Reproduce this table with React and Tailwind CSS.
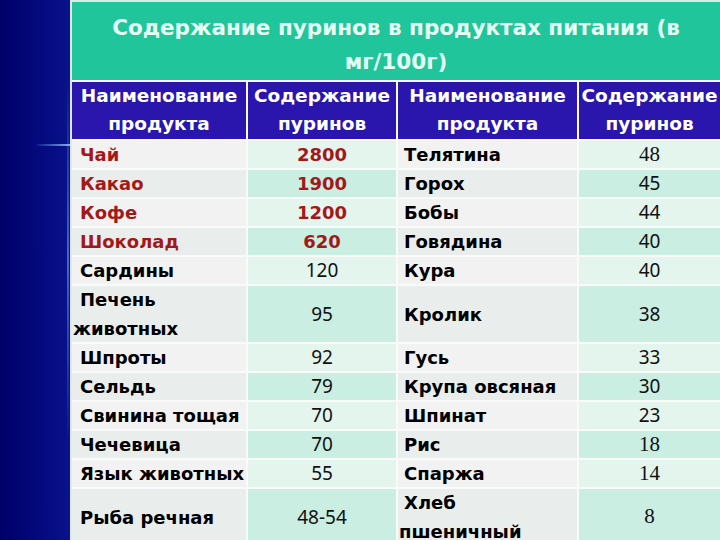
import React from "react";

const rows = [
  { a: "Чай", b: "2800", c: "Телятина", d: "48", red: true, serif: true },
  { a: "Какао", b: "1900", c: "Горох", d: "45", red: true },
  { a: "Кофе", b: "1200", c: "Бобы", d: "44", red: true },
  { a: "Шоколад", b: "620", c: "Говядина", d: "40", red: true },
  { a: "Сардины", b: "120", c: "Кура", d: "40" },
  { a: ["Печень", "животных"], b: "95", c: "Кролик", d: "38", tall: true },
  { a: "Шпроты", b: "92", c: "Гусь", d: "33" },
  { a: "Сельдь", b: "79", c: "Крупа овсяная", d: "30" },
  { a: "Свинина тощая", b: "70", c: "Шпинат", d: "23" },
  { a: "Чечевица", b: "70", c: "Рис", d: "18", serif: true },
  { a: "Язык животных", b: "55", c: "Спаржа", d: "14", serif: true },
  { a: "Рыба речная", b: "48-54", c: ["Хлеб", "пшеничный"], d: "8", tall: true, serif: true },
];

const bold = "font-['DejaVu_Sans',sans-serif] font-bold";

function NameCell({ value, width, pad, dark, red }) {
  const bg = dark ? "bg-[#e9eeec]" : "bg-[#f1f2f1]";
  const color = red ? "text-[#a31818]" : "text-black";
  return (
    <div className={`${width} ${bg} ${color} ${bold} text-[18px] leading-[29px] flex flex-col justify-center whitespace-nowrap`}>
      {Array.isArray(value) ? (
        <>
          <span className={pad}>{value[0]}</span>
          <span className="pl-[1px]">{value[1]}</span>
        </>
      ) : (
        <span className={pad}>{value}</span>
      )}
    </div>
  );
}

function NumCell({ value, width, dark, red, serif }) {
  const bg = dark ? "bg-[#caeee1]" : "bg-[#e4f5ee]";
  let font = "font-['Noto_Sans',sans-serif] text-[19px] text-[#111]";
  if (red) font = `${bold} text-[18px] text-[#a31818]`;
  if (serif) font = "font-['Liberation_Serif',serif] text-[21px] text-[#111]";
  return (
    <div className={`${width} ${bg} ${font} flex items-center justify-center`}>
      {value}
    </div>
  );
}

export default function App() {
  return (
    <div className="flex w-[720px] h-[540px] overflow-hidden bg-[#00006e]">
      <div className="relative w-[70px] shrink-0 bg-gradient-to-r from-[#00006a] to-[#0a128c]">
        <div className="absolute right-[1px] top-[80px] w-[2px] h-[360px] bg-gradient-to-b from-[#0a128c] via-[#4a62d8] to-[#0a128c]" />
        <div className="absolute right-0 top-[144px] w-[34px] h-[2px] bg-gradient-to-r from-[#0a128c] to-[#8ea8f0]" />
      </div>
      <div className="w-[650px] border-l-2 border-[#dfe8ee] border-t-2 border-t-[#d6efe6] flex flex-col gap-[2px] bg-[#f8fbfa]">
        <div className={`h-[78px] shrink-0 bg-[#21c59b] text-[#e6fff3] ${bold} text-[21.5px] leading-[34px] text-center pt-[9px] px-1 whitespace-nowrap`}>
          Содержание пуринов в продуктах питания (в
          <br />
          мг/100г)
        </div>
        <div className={`flex gap-[2px] h-[57px] shrink-0 ${bold} text-[18.5px] leading-[28px] text-white text-center`}>
          <div className="w-[174px] bg-[#2a16ad]">Наименование<br />продукта</div>
          <div className="w-[148px] bg-[#2a16ad]">Содержание<br />пуринов</div>
          <div className="w-[179px] bg-[#2a16ad]">Наименование<br />продукта</div>
          <div className="w-[141px] bg-[#2a16ad]">Содержание<br />пуринов</div>
        </div>
        {rows.map((r, i) => {
          const dark = i % 2 === 1;
          return (
            <div key={i} className={`flex gap-[2px] shrink-0 ${r.tall ? "h-[56px]" : "h-[27px]"}`}>
              <NameCell value={r.a} width="w-[174px]" pad="pl-[8px]" dark={dark} red={r.red} />
              <NumCell value={r.b} width="w-[148px]" dark={dark} red={r.red} />
              <NameCell value={r.c} width="w-[179px]" pad="pl-[6px]" dark={dark} />
              <NumCell value={r.d} width="w-[141px]" dark={dark} serif={r.serif} />
            </div>
          );
        })}
      </div>
    </div>
  );
}
